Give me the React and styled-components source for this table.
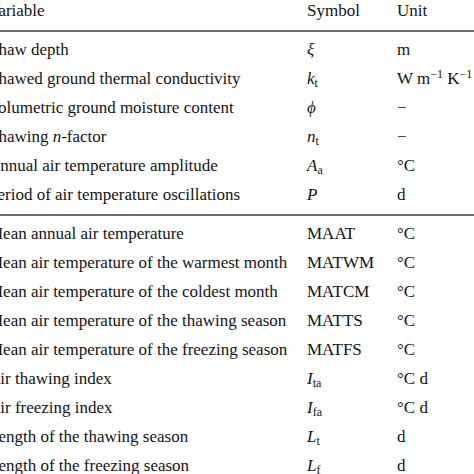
import React, { Fragment } from "react";
import styled, { createGlobalStyle } from "styled-components";

const GlobalStyle = createGlobalStyle`
  html, body {
    margin: 0;
    padding: 0;
    background: #ffffff;
    overflow: hidden;
  }
  body {
    width: 474px;
    height: 474px;
    font-family: "Liberation Serif", "Times New Roman", serif;
    color: #141414;
  }
`;

const Table = styled.div`
  margin-left: -12px;
  width: 600px;
  font-size: 17px;
`;

const HeadRow = styled.div`
  display: grid;
  grid-template-columns: 319px 90px auto;
  height: 22px;
  line-height: 22px;
  margin-bottom: 8px;
  white-space: nowrap;
`;

const Row = styled.div`
  display: grid;
  grid-template-columns: 319px 90px auto;
  height: 29px;
  line-height: 29px;
  white-space: nowrap;
`;

const Cell = styled.div`
  overflow: visible;
`;

const Rule = styled.div`
  height: 2px;
  background: #6a6a6a;
  margin-top: ${(p) => (p.$gap ? "5.5px" : "0")};
  margin-bottom: 2.5px;
`;

const Sym = styled.span`
  font-style: italic;
`;

const Sub = styled.sub`
  font-style: normal;
  font-size: 12px;
  vertical-align: -3px;
  line-height: 0;
`;

const Sup = styled.sup`
  font-size: 12px;
  vertical-align: 6px;
  line-height: 0;
`;

const sectionOne = [
  { name: "Thaw depth", sym: <Sym>ξ</Sym>, unit: "m" },
  {
    name: "Thawed ground thermal conductivity",
    sym: (
      <Sym>
        k<Sub>t</Sub>
      </Sym>
    ),
    unit: (
      <Fragment>
        W m<Sup>−1</Sup> K<Sup>−1</Sup>
      </Fragment>
    ),
  },
  { name: "Volumetric ground moisture content", sym: <Sym>ϕ</Sym>, unit: "−" },
  {
    name: (
      <Fragment>
        Thawing <i>n</i>-factor
      </Fragment>
    ),
    sym: (
      <Sym>
        n<Sub>t</Sub>
      </Sym>
    ),
    unit: "−",
  },
  {
    name: "Annual air temperature amplitude",
    sym: (
      <Sym>
        A<Sub>a</Sub>
      </Sym>
    ),
    unit: "°C",
  },
  { name: "Period of air temperature oscillations", sym: <Sym>P</Sym>, unit: "d" },
];

const sectionTwo = [
  { name: "Mean annual air temperature", sym: "MAAT", unit: "°C" },
  { name: "Mean air temperature of the warmest month", sym: "MATWM", unit: "°C" },
  { name: "Mean air temperature of the coldest month", sym: "MATCM", unit: "°C" },
  { name: "Mean air temperature of the thawing season", sym: "MATTS", unit: "°C" },
  { name: "Mean air temperature of the freezing season", sym: "MATFS", unit: "°C" },
  {
    name: "Air thawing index",
    sym: (
      <Sym>
        I<Sub>ta</Sub>
      </Sym>
    ),
    unit: "°C d",
  },
  {
    name: "Air freezing index",
    sym: (
      <Sym>
        I<Sub>fa</Sub>
      </Sym>
    ),
    unit: "°C d",
  },
  {
    name: "Length of the thawing season",
    sym: (
      <Sym>
        L<Sub>t</Sub>
      </Sym>
    ),
    unit: "d",
  },
  {
    name: "Length of the freezing season",
    sym: (
      <Sym>
        L<Sub>f</Sub>
      </Sym>
    ),
    unit: "d",
  },
];

function App() {
  return (
    <Fragment>
      <GlobalStyle />
      <Table>
        <HeadRow>
          <Cell>Variable</Cell>
          <Cell>Symbol</Cell>
          <Cell>Unit</Cell>
        </HeadRow>
        <Rule />
        {sectionOne.map((r, i) => (
          <Row key={i}>
            <Cell>{r.name}</Cell>
            <Cell>{r.sym}</Cell>
            <Cell>{r.unit}</Cell>
          </Row>
        ))}
        <Rule $gap />
        {sectionTwo.map((r, i) => (
          <Row key={i}>
            <Cell>{r.name}</Cell>
            <Cell>{r.sym}</Cell>
            <Cell>{r.unit}</Cell>
          </Row>
        ))}
      </Table>
    </Fragment>
  );
}

export default App;
